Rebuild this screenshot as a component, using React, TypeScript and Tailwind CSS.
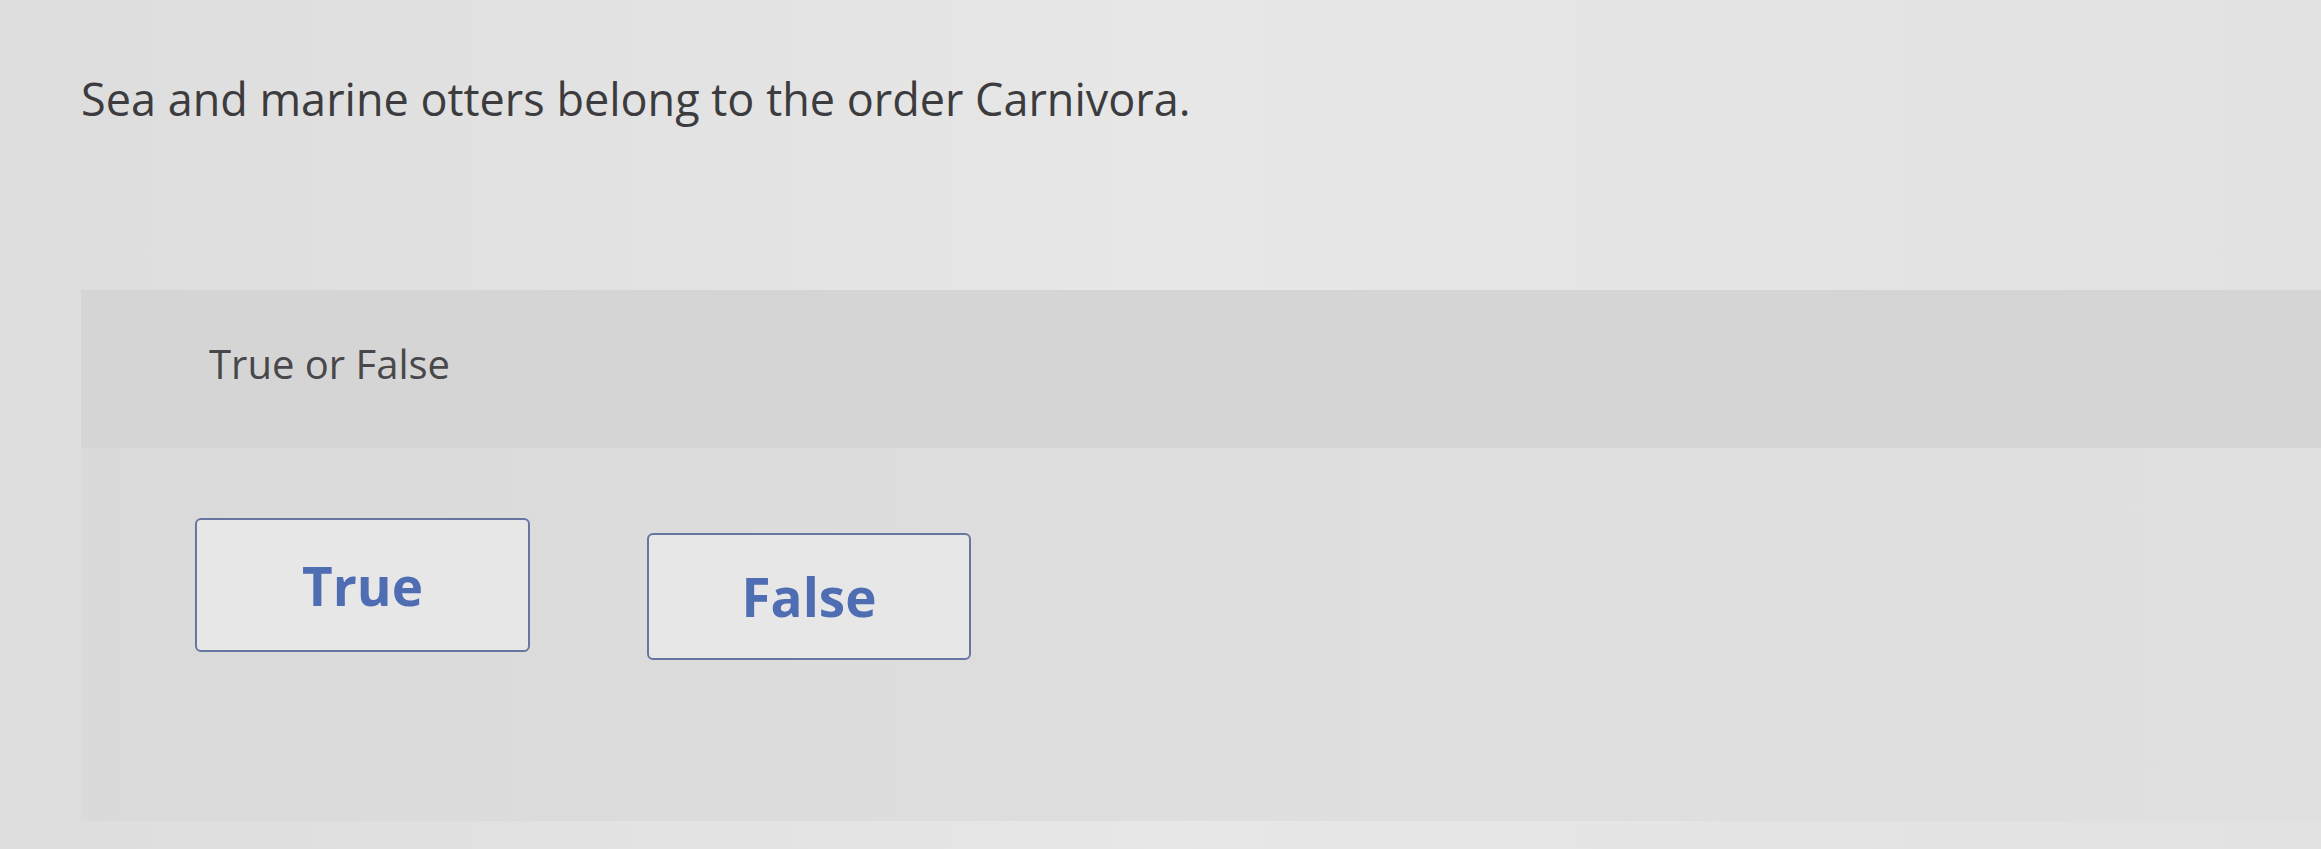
const choices = [
  { label: 'True', box: 'w-[335px] h-[134px]' },
  { label: 'False', box: 'w-[324px] h-[127px] mt-[15px]' },
];

function ChoiceButton({ label, box }: { label: string; box: string }) {
  return (
    <button
      type="button"
      className={`${box} flex items-center justify-center rounded-[6px] border-[2.5px] border-[#6676a0] bg-[#e7e7e7] text-[53px] font-bold leading-none text-[#4e6db3]`}
    >
      {label}
    </button>
  );
}

export default function App() {
  return (
    <div className="h-[849px] w-full overflow-hidden bg-linear-to-r from-[#dddddd] via-[#e7e7e7] to-[#e2e2e2] font-['Open_Sans',sans-serif]">
      <p className="pl-[81px] pt-[76px] text-[45px] leading-none text-[#3c3c3e]">
        Sea and marine otters belong to the order Carnivora.
      </p>

      <section className="ml-[81px] mt-[169px]">
        <div className="h-[158px] bg-[#d5d5d5] pl-[128px] pt-[54px]">
          <h2 className="text-[40px] leading-none text-[#48484a]">True or False</h2>
        </div>
        <div className="flex h-[373px] items-start gap-[117px] bg-linear-to-r from-[#dadada] via-[#dedede] to-[#e0e0e0] pl-[114px] pt-[70px]">
          {choices.map((c) => (
            <ChoiceButton key={c.label} label={c.label} box={c.box} />
          ))}
        </div>
      </section>
    </div>
  );
}
